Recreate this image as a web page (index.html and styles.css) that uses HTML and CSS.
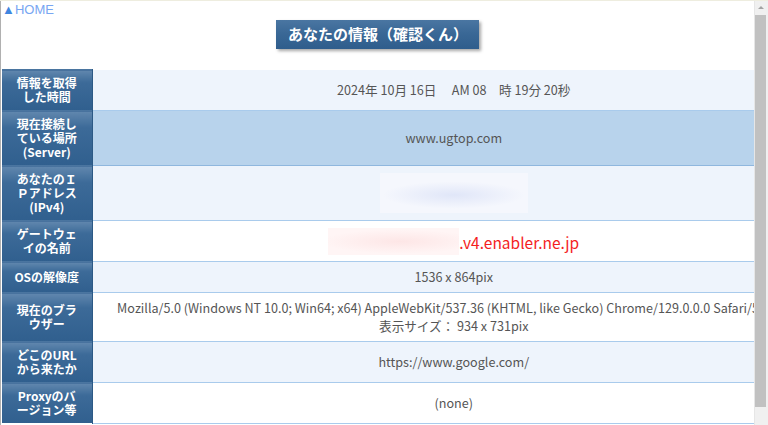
FILE: index.html
```html
<!DOCTYPE html>
<html lang="ja">
<head>
<meta charset="utf-8">
<title>あなたの情報（確認くん）</title>
<link rel="stylesheet" href="styles.css">
</head>
<body>
<div class="window">
  <div class="page">
    <a class="home" href="#"><span class="tri">▲</span>HOME</a>
    <div class="title-wrap"><h1 class="title">あなたの情報（確認くん）</h1></div>
    <table class="info">
      <tr class="row-a">
        <th>情報を取得<br>した時間</th>
        <td>2024年 10月 16日　 AM 08　時 19分 20秒</td>
      </tr>
      <tr class="row-hl">
        <th>現在接続し<br>ている場所<br>(Server)</th>
        <td>www.ugtop.com</td>
      </tr>
      <tr class="row-a">
        <th>あなたのＩ<br>Ｐアドレス<br>(IPv4)</th>
        <td><span class="blur-ip"></span></td>
      </tr>
      <tr class="row-b">
        <th>ゲートウェ<br>イの名前</th>
        <td><span class="blur-host"></span><span class="host">.v4.enabler.ne.jp</span></td>
      </tr>
      <tr class="row-a">
        <th>OSの解像度</th>
        <td>1536 x 864pix</td>
      </tr>
      <tr class="row-b">
        <th>現在のブラ<br>ウザー</th>
        <td>Mozilla/5.0 (Windows NT 10.0; Win64; x64) AppleWebKit/537.36 (KHTML, like Gecko) Chrome/129.0.0.0 Safari/537.36<br>表示サイズ： 934 x 731pix</td>
      </tr>
      <tr class="row-a">
        <th>どこのURL<br>から来たか</th>
        <td>https://www.google.com/</td>
      </tr>
      <tr class="row-b">
        <th>Proxyのバ<br>ージョン等</th>
        <td>(none)</td>
      </tr>
    </table>
  </div>
  <div class="scrollbar">
    <div class="sb-arrow"></div>
    <div class="sb-thumb"></div>
  </div>
</div>
</body>
</html>
```
FILE: styles.css
```css
* { box-sizing: border-box; }
html, body { margin: 0; padding: 0; }
body {
  font-family: "Noto Sans CJK JP", "Noto Sans", sans-serif;
  background: #fff;
  width: 768px;
  height: 425px;
  overflow: hidden;
}
.window {
  display: flex;
  height: 425px;
  border-top: 1px solid #eeeddf;
}
.page {
  width: 754px;
  flex: none;
  overflow: hidden;
  border-left: 1px solid #b0b0b0;
  background: #fff;
}
.home {
  display: block;
  height: 18px;
  padding: 1px 0 0 1px;
  font-family: "Liberation Sans", sans-serif;
  font-size: 13px;
  line-height: 16px;
  color: #78a6f2;
  text-decoration: none;
}
.home .tri { color: #3f86e0; font-size: 13px; }
.title-wrap {
  display: flex;
  justify-content: center;
  padding-top: 1px;
  margin-bottom: 20px;
}
.title {
  margin: 0;
  width: 203px;
  height: 29px;
  padding-left: 12px;
  font-size: 15px;
  line-height: 28px;
  font-weight: bold;
  color: #fff;
  background: linear-gradient(#4a76a2, #3a6896 45%, #2f5d8c);
  box-shadow: 2px 2px 3px rgba(0, 0, 0, 0.35);
  text-align: left;
  white-space: nowrap;
}
.info {
  margin-left: 1px;
  width: 813px;
  border-collapse: collapse;
  table-layout: fixed;
}
.info th {
  width: 90px;
  padding: 6px 0;
  font-size: 12px;
  line-height: 14px;
  font-weight: bold;
  color: #fff;
  text-align: center;
  vertical-align: middle;
  background: linear-gradient(#6187ae, #3c6a98 30%, #305f8e);
  border-top: 1px solid #4a75a0;
  border-right: 1px solid #2c5985;
}
.info td {
  padding: 6px 4px;
  font-size: 12.6px;
  line-height: 18px;
  color: #555;
  text-align: center;
  vertical-align: middle;
  border-bottom: 1px solid #a9cbec;
}
.row-a td { background: #eef4fc; }
.row-b td { background: #fff; }
.row-hl td { background: #b8d3ec; border-bottom-color: #8fb7de; }
.blur-ip {
  display: inline-block;
  vertical-align: middle;
  width: 148px;
  height: 40px;
  background:
    radial-gradient(ellipse 48% 34% at 50% 55%, #e0e6f8, rgba(224, 230, 248, 0) 100%),
    #f5f7fd;
}
.blur-host {
  display: inline-block;
  vertical-align: middle;
  width: 131px;
  height: 27px;
  background:
    radial-gradient(ellipse 60% 45% at 55% 50%, #fde6e6, rgba(253, 230, 230, 0) 100%),
    #fff5f5;
}
.host {
  vertical-align: middle;
  font-size: 15.5px;
  color: #f41e1e;
}
.scrollbar {
  flex: none;
  width: 14px;
  height: 425px;
  background: #f0f0f0;
  border-left: 1px solid #e6e6e6;
  display: flex;
  flex-direction: column;
  align-items: flex-start;
}
.sb-arrow {
  width: 0;
  height: 0;
  margin: 5px 0 0 3px;
  border-left: 3px solid transparent;
  border-right: 3px solid transparent;
  border-bottom: 3px solid #a3a3a3;
}
.sb-thumb {
  margin-top: 6px;
  width: 11px;
  height: 392px;
  background: #c1c1c1;
}
```
